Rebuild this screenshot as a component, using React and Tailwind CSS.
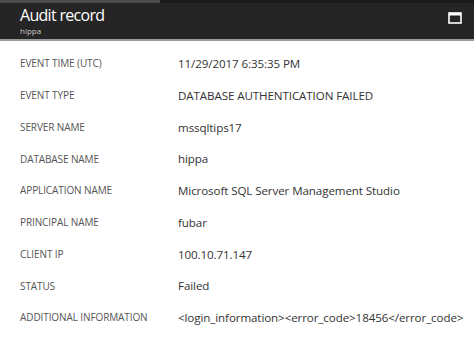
import React from 'react';

const rows = [
  ['EVENT TIME (UTC)', '11/29/2017 6:35:35 PM'],
  ['EVENT TYPE', 'DATABASE AUTHENTICATION FAILED'],
  ['SERVER NAME', 'mssqltips17'],
  ['DATABASE NAME', 'hippa'],
  ['APPLICATION NAME', 'Microsoft SQL Server Management Studio'],
  ['PRINCIPAL NAME', 'fubar'],
  ['CLIENT IP', '100.10.71.147'],
  ['STATUS', 'Failed'],
  ['ADDITIONAL INFORMATION', '<login_information><error_code>18456</error_code>'],
];

const App = () => {
  return (
    <div className="w-[474px] h-[350px] bg-white overflow-hidden" style={{ fontFamily: '"Open Sans", "Noto Sans", sans-serif' }}>
      {/* header */}
      <div className="flex h-[3px]">
        <div className="w-[160px] bg-[#4b4b4b]" />
        <div className="flex-1 bg-[#1b1b1b]" />
      </div>
      <div className="h-[38px] bg-[#252525] flex items-start justify-between pl-5 pr-3 border-b-2 border-[#9a9a9a]">
        <div className="flex flex-col">
          <span className="text-[16px] leading-[17px] text-white mt-[4px] tracking-[-0.7px]">Audit record</span>
          <span className="text-[8px] leading-[10px] text-[#c8c8c8] mt-[2px]">hippa</span>
        </div>
        <svg className="mt-[9px]" width="14" height="12" viewBox="0 0 14 12">
          <rect x="1" y="1" width="12" height="10" fill="none" stroke="#fff" strokeWidth="1.6" />
          <rect x="1" y="1" width="12" height="2.5" fill="#fff" />
        </svg>
      </div>
      {/* record */}
      <div className="flex flex-col pt-[7px]">
        {rows.map(([label, value]) => (
          <div key={label} className="flex items-center h-[31.75px]">
            <div className="w-[178px] pl-5 text-[10px] text-[#555] tracking-[-0.1px]">{label}</div>
            <div className="text-[11.6px] text-[#333] whitespace-nowrap tracking-[-0.1px]">{value}</div>
          </div>
        ))}
      </div>
    </div>
  );
};

export default App;
